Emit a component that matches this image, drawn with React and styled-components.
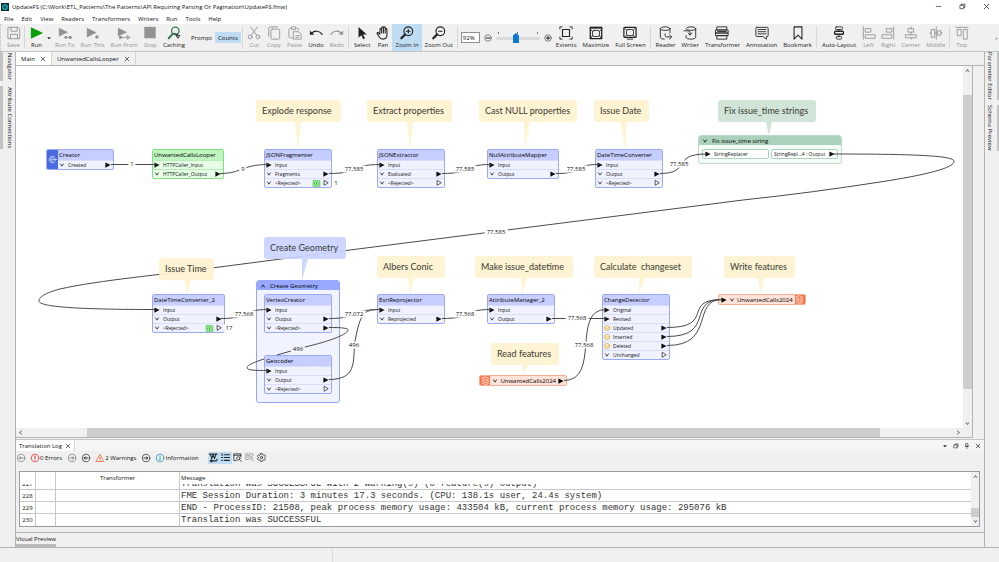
import React from "react";
import styled, { createGlobalStyle } from "styled-components";

const GlobalStyle = createGlobalStyle`
  * {
    box-sizing: border-box;
  }
  body {
    margin: 0;
    background-color: #f0f0f0;
    color: #111;
    font-family: "Open Sans", "Noto Sans", sans-serif;
    font-size: 6px;
    line-height: 8px;
  }
  button,
  input {
    font: inherit;
    color: inherit;
    border: 0;
    padding: 0;
    background: none;
  }
`;

/* ---------- icons ---------- */

const Svg = styled.svg`
  display: block;
  flex: none;
  width: ${(props) => props.$size || 14}px;
  height: ${(props) => props.$size || 14}px;
  fill: none;
  stroke: currentColor;
  stroke-linecap: round;
  stroke-linejoin: round;
  overflow: visible;
`;

const solid = { fill: "currentColor", stroke: "none" };

const shapes = {
  save: (
    <>
      <path d="M1.5 1.5h11l2 2v11h-13z" />
      <path d="M4.5 1.5v4.5h7V1.5M4 14.5v-5h8v5" />
    </>
  ),
  run: <path d="M1 1.5 15 8 1 14.5z" fill="#0a9f0a" stroke="none" />,
  runTo: (
    <>
      <path d="M1 2 11.5 7 1 12z" {...solid} />
      <path d="M7 13h7" />
      <circle cx="9" cy="13" r="1.6" {...solid} />
      <circle cx="14" cy="13" r="1.8" {...solid} />
    </>
  ),
  runThis: (
    <>
      <path d="M1 2 12 7.5 1 13z" {...solid} />
      <circle cx="12.5" cy="12.5" r="2" {...solid} />
    </>
  ),
  runFrom: (
    <>
      <path d="M1 2 11.5 7 1 12z" {...solid} />
      <circle cx="4" cy="13" r="1.8" {...solid} />
      <path d="M5 13h8M12 11l3 2-3 2z" />
    </>
  ),
  stop: <path d="M1.5 1h13v13h-13z" {...solid} />,
  caching: (
    <>
      <g stroke="#3c7a56" strokeWidth="1.5">
        <circle cx="9.5" cy="5.5" r="4.3" />
        <path d="M6.5 9 2 14" strokeWidth="2.4" />
      </g>
      <path d="M8 8.5c3 0 4.5 1 4.5 3M10.500 11l2 3 2-3z" />
    </>
  ),
  cut: (
    <>
      <circle cx="3.5" cy="12.5" r="2.2" />
      <circle cx="12.5" cy="12.5" r="2.2" />
      <path d="M4.800 10.600 12 1M11.200 10.600 4 1" />
    </>
  ),
  copy: (
    <>
      <rect x="4.5" y="3.5" width="10" height="11.5" rx="1.5" />
      <path d="M2 12V2.500A1.500 1.500 0 0 1 3.500 1H12" />
    </>
  ),
  paste: (
    <>
      <path d="M5 13.500H2.500A1.500 1.500 0 0 1 1 12V4a1.500 1.500 0 0 1 1.500-1.500H4M9 2.500h1.500A1.500 1.500 0 0 1 12 4v1" />
      <path d="M4.500 1h4v3h-4zM6.500 6.500h5.500L15 9.500v5.500H6.500zM9 11h4M9 13h3" />
    </>
  ),
  undo: (
    <>
      <path d="M3 8.500C6 5 12 5 15 9.500" strokeWidth="1.4" />
      <path d="M1 5v5h5z" {...solid} />
    </>
  ),
  redo: (
    <>
      <path d="M13 8.500C10 5 4 5 1 9.500" strokeWidth="1.4" />
      <path d="M15 5v5h-5z" {...solid} />
    </>
  ),
  select: <path d="M4 1v12.500l3.200-3 2.200 4.500 2-1-2.200-4.300h4.300z" {...solid} />,
  pan: (
    <path
      strokeWidth="1.2"
      d="M4.500 9.500V4a1 1 0 0 1 2 0V2a1 1 0 0 1 2 0v0a1 1 0 0 1 2 0v2a1 1 0 0 1 2 0v6c0 3-1.500 5-4.500 5-2.500 0-3.500-1-4.500-2.800L1.300 8.700c-.5-1.200 1-1.700 1.700-.9zM6.500 4v4M8.500 2.500V8M10.500 4v4"
    />
  ),
  zoomIn: (
    <>
      <circle cx="9.5" cy="6" r="5" strokeWidth="1.3" />
      <path d="M7.500 6h4M9.500 4v4" strokeWidth="1.3" />
      <path d="M5.800 9.700 1.500 14" strokeWidth="2.6" />
    </>
  ),
  zoomOut: (
    <>
      <circle cx="9.5" cy="6" r="5" strokeWidth="1.3" />
      <path d="M7.500 6h4" strokeWidth="1.3" />
      <path d="M5.800 9.700 1.500 14" strokeWidth="2.6" />
    </>
  ),
  extents: (
    <>
      <path d="M4 4h8v8H4z" strokeWidth="1.3" />
      <path d="M1 3.500V1h2.500M12.500 1H15v2.500M15 12.500V15h-2.500M3.500 15H1v-2.500" />
    </>
  ),
  maximize: (
    <>
      <path d="M1.500 1.500h13v13h-13z" strokeWidth="1.5" />
      <path d="M1 1h14v2H1z" {...solid} />
      <rect x="4" y="5" width="8" height="7" rx="2" />
      <path d="M2 4l2 2M14 4l-2 2M2 14l2-3M14 14l-2-3" />
    </>
  ),
  fullScreen: (
    <>
      <rect x="1" y="1.5" width="14" height="11.5" rx="1" strokeWidth="1.4" />
      <rect x="4" y="4" width="8" height="7" rx="2" />
      <path d="M2 2.500l2 2M14 2.500l-2 2M2 12.500l2-2M14 12.500l-2-2M5 15h6" />
    </>
  ),
  reader: (
    <>
      <ellipse cx="7" cy="3" rx="5.5" ry="2" />
      <path d="M1.500 3v10c0 1.200 2 2 4.500 2M12.500 3v5" />
      <path d="M7 9v1.500a2 2 0 0 0 2 2h5M12 10l2.500 2.500L12 15" />
    </>
  ),
  writer: (
    <>
      <ellipse cx="9" cy="3" rx="5.5" ry="2" />
      <path d="M14.500 3v10c0 1.200-2.500 2-5.500 2s-5.500-.8-5.500-2v-2" />
      <path d="M1 5.500h5a2 2 0 0 1 2 2V10M6 8l2 2.500L10 8" />
    </>
  ),
  transformer: (
    <>
      <path d="M2.500 1h11v3.500h-11zM1 4.500h14v3.500H1zM1 8h14v3H1zM2.500 11h11v4h-11z" />
      <path d="M3 6.300h10" />
    </>
  ),
  annotation: (
    <>
      <path d="M2 1.500h12a1 1 0 0 1 1 1v8.500a1 1 0 0 1-1 1h-1v3l-4-3H2a1 1 0 0 1-1-1V2.500a1 1 0 0 1 1-1z" />
      <path d="M3.500 4h9M3.500 6.500h9M3.500 9h9" />
    </>
  ),
  bookmark: <path d="M3.500 1h9v14L8 10.500 3.500 15z" strokeWidth="1.2" />,
  autoLayout: (
    <>
      <rect x="4" y="1" width="8" height="3" rx="1" />
      <rect x="3" y="6" width="10" height="3.5" rx="1" strokeWidth="1.6" />
      <rect x="5" y="12" width="6" height="3" rx="1" />
      <path d="M8 4v2M8 9.500V12" />
    </>
  ),
  alignLeft: <path d="M1.500 1v14M4 3h6v4H4zM4 10h11v4H4z" />,
  alignRight: <path d="M14.500 1v14M12 3H6v4h6zM12 10H1v4h11z" />,
  alignCenter: <path d="M8 1v2M5 3h6v4H5zM8 7v3M2 10h12v3.500H2zM8 13.500V15" />,
  alignMiddle: <path d="M1 8h1.500M3 4h3.500v9H3zM6.500 8H10M8.300 1v14M10 5.500h3.500v5H10zM13.500 8H15" />,
  alignTop: <path d="M1 1.500h14M3 4h4v7H3zM10 4h4v11h-4z" />,
  caret: <path d="M3 6h10l-5 5z" {...solid} />,
  close: <path d="M3 3l10 10M13 3 3 13" strokeWidth="1.8" />,
  minimize: <path d="M3 8h10" strokeWidth="1.5" />,
  restore: <path d="M3 5h8v8H3zM5.500 5V2.500h8V10H11" strokeWidth="1.5" />,
  pin: <path d="M5.500 1.500h5v7h-5zM3.500 9h9M8 9v6" strokeWidth="1.5" />,
  chevronDown: <path d="M4 5l4 6 4-6" strokeWidth="2" />,
  chevronUp: <path d="M4 11l4-6 4 6" strokeWidth="2" />,
  chevronLeft: <path d="M11 3 5 8l6 5" strokeWidth="2" />,
  chevronRight: <path d="M5 3l6 5-6 5" strokeWidth="2" />,
  arrow: <path d="M1 1v14l14-7z" {...solid} />,
  arrowOpen: <path d="M3 2v12l10-6z" strokeWidth="1.8" fill="#fff" />,
  minus: (
    <>
      <circle cx="8" cy="8" r="6.5" />
      <path d="M4.500 8h7" strokeWidth="2" />
    </>
  ),
  plus: (
    <>
      <circle cx="8" cy="8" r="6.5" />
      <path d="M4.500 8h7M8 4.500v7" strokeWidth="2" />
    </>
  ),
  back: (
    <>
      <circle cx="8" cy="8" r="7.5" strokeWidth="1.4" />
      <path d="M12 8H4.500M7 5.500 4.500 8 7 10.500" strokeWidth="1.8" />
    </>
  ),
  forward: (
    <>
      <circle cx="8" cy="8" r="7.5" strokeWidth="1.4" />
      <path d="M4 8h7.500M9 5.500 11.500 8 9 10.500" strokeWidth="1.8" />
    </>
  ),
  error: (
    <g stroke="#e0252b" strokeWidth="1.5">
      <circle cx="8" cy="8" r="7.5" />
      <path d="M8 4v4.500M8 11.500v.3" strokeWidth="2" />
    </g>
  ),
  warning: (
    <g stroke="#e8662c" strokeWidth="1.5">
      <path d="M8 1 15.500 15H.5z" />
      <path d="M8 6v4M8 12.500v.2" strokeWidth="2" />
    </g>
  ),
  info: (
    <g stroke="#1b8fa8" strokeWidth="1.5">
      <circle cx="8" cy="8" r="7.5" />
      <path d="M8 7.500V12M8 4.500v.2" strokeWidth="2" />
    </g>
  ),
  wrap: (
    <path
      strokeWidth="1.8"
      d="M1 2h3M6 2h3M2.500 2l2.300 8L7.500 3l2.300 7L12.500 2M11 2h3M2 14h10a2 2 0 0 0 2-3M5 12l-3 2 3 2"
    />
  ),
  list: (
    <>
      <path d="M6 3h9M6 8h9M6 13h9" strokeWidth="2" />
      <path d="M2 1.500v3M1 8h2M1 13h2" strokeWidth="1.8" />
    </>
  ),
  find: (
    <path
      strokeWidth="1.4"
      d="M14 7V1.500H1.500v12H6M1.500 4H14M12.500 9.500a3 3 0 1 1-6 0 3 3 0 0 1 6 0M11.800 12l3 3"
    />
  ),
  findNext: (
    <path
      strokeWidth="1.3"
      d="M14 5V1.500H1.500v10H6M4 4.500h4M12.500 8.500a2.500 2.500 0 1 1-5 0 2.500 2.500 0 0 1 5 0M12 11l3 3M4 7h2"
    />
  ),
  gear: (
    <>
      <path
        strokeWidth="1.3"
        d="M6.500 1h3l.5 2 1.600.9 2-.6 1.500 2.600-1.500 1.400v1.400l1.500 1.400-1.500 2.600-2-.6-1.600.9-.5 2h-3l-.5-2-1.600-.9-2 .6L.9 10.100l1.500-1.400V7.300L.9 5.900l1.500-2.600 2 .6L6 3z"
      />
      <circle cx="8" cy="8" r="2" strokeWidth="1.5" />
    </>
  ),
  logo: (
    <>
      <path d="M0 0h16v16H0z" fill="#0d2a33" stroke="none" />
      <circle cx="8" cy="8" r="4.5" stroke="#27b7c4" strokeWidth="2.5" />
      <circle cx="8" cy="8" r="1.5" fill="#27b7c4" stroke="none" />
    </>
  ),
  creator: (
    <g stroke="#dfe5ff" strokeWidth="1.3">
      <path d="M11.500 3a6 6 0 1 0 0 10" />
      <path d="M10 5.500a3.300 3.300 0 1 0 0 5M7 8h8M13 6l2 2-2 2" />
    </g>
  ),
  dataset: (
    <g stroke="#ffd9c9" strokeWidth="1.5">
      <path d="M8 1.500 14 4 8 6.500 2 4z" />
      <path d="M2 7l6 2.500L14 7M2 10l6 2.500L14 10M2 13l6 2.500L14 13" />
    </g>
  ),
  eye: (
    <>
      <rect x="0" y="1" width="16" height="14" rx="2" fill="#8be88b" stroke="#35b635" />
      <path d="M3 8c2.500-4 7.500-4 10 0-2.500 4-7.500 4-10 0z" fill="#d5fbd5" stroke="#2a9a2a" />
      <circle cx="8" cy="8" r="1.5" fill="#1f8a1f" stroke="none" />
    </>
  ),
  expand: (
    <g stroke="#c09a30" strokeWidth="1.5">
      <circle cx="8" cy="8" r="7" fill="#fff0bd" />
      <path d="M5 7l3 3 3-3" />
    </g>
  ),
};

const Icon = ({ name, size }) => (
  <Svg viewBox="0 0 16 16" $size={size} aria-hidden="true">
    {shapes[name]}
  </Svg>
);

/* ---------- window chrome ---------- */

const Window = styled.div`
  display: flex;
  flex-direction: column;
  min-height: 100vh;
  overflow: hidden;
`;

const TitleBar = styled.header`
  display: flex;
  align-items: center;
  gap: 3px;
  height: 13px;
  padding: 0 9px 0 1px;
  background-color: #fff;
`;

const Title = styled.h1`
  flex: 1;
  margin: 0;
  font-size: 6px;
  font-weight: 400;
  white-space: nowrap;
`;

const WindowButtons = styled.div`
  display: flex;
  gap: 17px;
`;

const IconButton = styled.button`
  display: flex;
  align-items: center;
  color: ${(props) => (props.$faded ? "#777" : "#222")};
`;

const MenuBar = styled.nav`
  display: flex;
  height: 11px;
  background-color: #fff;
`;

const MenuItem = styled.button`
  padding: 0 4px;
  line-height: 10px;
`;

const Toolbar = styled.div`
  display: flex;
  align-items: stretch;
  height: 27px;
  padding: 0 1px 0 3px;
  border-left: 1px dotted #bbb;
  background-color: #f0f0f0;
`;

const ToolButton = styled.button`
  display: flex;
  flex-direction: column;
  align-items: center;
  gap: 1px;
  padding: 2px 3px 0;
  white-space: nowrap;
  color: ${(props) => (props.$disabled ? "#929292" : "#222")};
  background-color: ${(props) => (props.$active ? "#bfdcf3" : "transparent")};
`;

const ToolLabel = styled.span`
  display: flex;
  justify-content: center;
  min-width: 13px;
`;

const ToolIcon = styled.span`
  display: flex;
  justify-content: center;
  width: 12px;
`;

const TextTool = styled.button`
  align-self: center;
  height: 11px;
  padding: 0 3px;
  background-color: ${(props) => (props.$active ? "#bfdcf3" : "transparent")};
`;

const Separator = styled.div`
  width: 1px;
  margin: 2px 2px 2px 1px;
  background-color: #d8d8d8;
`;

const ZoomGroup = styled.div`
  display: flex;
  align-items: center;
  gap: 4px;
  padding: 0 1px;
`;

const ZoomValue = styled.input`
  width: 19px;
  height: 11px;
  padding: 0 1px;
  border: 1px solid #8f8f8f;
  background-color: #fff;
`;

const ZoomScale = styled.label`
  display: flex;
  flex-direction: column;
  width: 44px;
`;

const Ticks = styled.span`
  display: flex;
  justify-content: space-between;
  height: 2px;
  padding: 0 2px;

  i {
    width: 1px;
    background-color: #777;
  }
`;

const Slider = styled.input`
  appearance: none;
  width: 100%;
  height: 10px;
  margin: 0;

  &::-webkit-slider-runnable-track {
    height: 3px;
    background-color: #dcdcdc;
  }
  &::-webkit-slider-thumb {
    appearance: none;
    width: 6px;
    height: 10px;
    margin-top: -4px;
    background-color: #0a78d4;
    clip-path: polygon(0 25%, 50% 0, 100% 25%, 100% 100%, 0 100%);
  }
`;

const Overflow = styled.button`
  margin-left: auto;
  color: #666;
`;

/* ---------- body ---------- */

const Body = styled.div`
  display: flex;
  flex: 1;
  border-top: 1px solid #c4c4c4;
`;

const Rail = styled.aside`
  display: flex;
  flex-direction: column;
  gap: 5px;
  width: ${(props) => (props.$right ? 14 : 15)}px;
`;

const RailTab = styled.button`
  padding: ${(props) => (props.$right ? "0 2px 0 0" : "1px 0")};
  border-left: ${(props) => (props.$right ? "0" : "3px solid #c2c2c2")};
  border-right: ${(props) => (props.$right ? "2px solid #c2c2c2" : "0")};
  writing-mode: vertical-rl;
  text-align: start;
  line-height: 11px;
`;

const Center = styled.main`
  display: flex;
  flex: 1;
  flex-direction: column;
  min-width: 0;
  border-left: 1px solid #b4b4b4;
  border-right: 1px solid #b4b4b4;
`;

const Tabs = styled.div`
  display: flex;
  height: 14px;
  border-bottom: 1px solid #b4b4b4;
`;

const Tab = styled.div`
  display: flex;
  align-items: center;
  gap: 5px;
  padding: 0 5px;
  border-right: 1px solid #d4d4d4;
  background-color: ${(props) => (props.$active ? "#fff" : "#f0f0f0")};
`;

const CanvasFrame = styled.section`
  display: grid;
  flex: 1;
  grid-template-columns: 1fr 9px;
  grid-template-rows: 1fr 9px;
  margin-right: 11px;
  border-right: 1px solid #b4b4b4;
  border-bottom: 1px solid #b4b4b4;
`;

const Canvas = styled.div`
  position: relative;
  overflow: hidden;
  background-color: #fff;
`;

const ScrollBar = styled.div`
  display: flex;
  flex-direction: ${(props) => (props.$vertical ? "column" : "row")};
  align-items: center;
  justify-content: space-between;
  padding: ${(props) => (props.$vertical ? "2px 0" : "0 2px")};
`;

const ScrollTrack = styled.div`
  display: flex;
  flex: 1;
  flex-direction: ${(props) => (props.$vertical ? "column" : "row")};
  align-self: stretch;
`;

const ScrollSpace = styled.div`
  flex: ${(props) => props.$grow};
`;

const ScrollThumb = styled.div`
  flex: ${(props) => props.$grow};
  background-color: #cdcdcd;
`;

/* ---------- workspace canvas ---------- */

const palettes = {
  blue: { head: "#c5cefe", row: "#f0f2ff", line: "#d8ddfa", border: "#9caaf2" },
  green: { head: "#bff4bf", row: "#e6ffe6", line: "#b9ecb9", border: "#7fe07f" },
};

const NodeBox = styled.div`
  position: absolute;
  left: ${(props) => props.$x}px;
  top: ${(props) => props.$y}px;
  width: ${(props) => props.$w}px;
  display: flex;
  border: 1px solid ${(props) => props.$tone.border};
  border-radius: 2px;
  background-color: ${(props) => props.$tone.row};
  overflow: hidden;
`;

const NodeBadge = styled.div`
  display: flex;
  align-items: center;
  justify-content: center;
  width: 11px;
  background-color: #4a6be0;
`;

const NodeBody = styled.div`
  flex: 1;
  min-width: 0;
`;

const NodeTitle = styled.div`
  height: 10px;
  padding-left: 1px;
  line-height: 10px;
  font-weight: 500;
  color: #000;
  white-space: nowrap;
  background-color: ${(props) => props.$tone.head};
`;

const Port = styled.div`
  display: flex;
  align-items: center;
  gap: 3px;
  height: 9px;
  padding: 0 2px 0 1px;
  font-size: 5px;
  border-top: 1px solid ${(props) => props.$tone.line};
`;

const PortName = styled.span`
  flex: 1;
  white-space: nowrap;
`;

const BookmarkBox = styled.div`
  position: absolute;
  left: ${(props) => props.$x}px;
  top: ${(props) => props.$y}px;
  width: ${(props) => props.$w}px;
  height: ${(props) => props.$h}px;
  border: 1px solid ${(props) => props.$border};
  border-radius: 3px;
  background-color: ${(props) => props.$fill};
  overflow: hidden;
`;

const BookmarkTitle = styled.div`
  display: flex;
  align-items: center;
  gap: 4px;
  height: 9px;
  padding-left: 3px;
  font-weight: 500;
  color: #000;
  background-color: ${(props) => props.$head};
`;

const BookmarkPorts = styled.div`
  display: grid;
  grid-template-columns: 1fr 1fr;
  gap: 2px;
  padding: 4px 3px;
`;

const BookmarkPort = styled.div`
  display: flex;
  align-items: center;
  gap: 3px;
  height: 10px;
  padding: 0 2px;
  border: 1px solid #abd0bb;
  border-radius: 2px;
  background-color: #fff;
  font-size: 5px;
  white-space: nowrap;
`;

const FeatureType = styled.div`
  position: absolute;
  left: ${(props) => props.$x}px;
  top: ${(props) => props.$y}px;
  width: 88px;
  height: 11px;
  display: flex;
  flex-direction: ${(props) => (props.$writer ? "row-reverse" : "row")};
  border: 1px solid #f6ab92;
  border-radius: 2px;
  background-color: #ffe3d9;
  overflow: hidden;
`;

const FeatureBadge = styled.div`
  display: flex;
  align-items: center;
  justify-content: center;
  width: 11px;
  background-color: #f4734a;
`;

const FeatureLabel = styled.div`
  display: flex;
  flex: 1;
  align-items: center;
  gap: 2px;
  padding: 0 2px;
  font-weight: 500;
  color: #000;
  white-space: nowrap;
`;

const WireLayer = styled.svg`
  position: absolute;
  inset: 0;
  width: 100%;
  height: 100%;
  fill: none;
  stroke: #4a4a4a;
`;

const WireCount = styled.span`
  position: absolute;
  left: ${(props) => props.$x}px;
  top: ${(props) => props.$y}px;
  transform: translate(-50%, -50%);
  line-height: 7px;
  padding: 0 2px;
  background-color: ${(props) => props.$fill || "#fff"};
`;

const CalloutBox = styled.div`
  position: absolute;
  left: ${(props) => props.$x}px;
  top: ${(props) => props.$y}px;
  width: ${(props) => props.$w}px;
  height: 22px;
  padding-left: 6px;
  border-radius: 3px;
  background-color: ${(props) => props.$fill};
  font-family: Lato, "Open Sans", sans-serif;
  font-size: 9px;
  line-height: 22px;
  white-space: pre;
  color: #3a3a33;
`;

const CalloutTail = styled.svg`
  position: absolute;
  left: 0;
  top: 100%;
  width: 100%;
  height: ${(props) => props.$h}px;
  overflow: visible;
`;

const nodes = [
  { name: "Creator", x: 30, y: 83, w: 68, badge: true, ports: [["out", "Created"]] },
  { name: "UnwantedCallsLooper", x: 136, y: 83, w: 72, tone: "green", ports: [["in", "HTTPCaller_Input"], ["out", "HTTPCaller_Output"]] },
  { name: "JSONFragmenter", x: 248, y: 83, w: 68, ports: [["in", "Input"], ["out", "Fragments"], ["seen", "<Rejected>"]] },
  { name: "JSONExtractor", x: 361, y: 83, w: 68, ports: [["in", "Input"], ["out", "Evaluated"], ["open", "<Rejected>"]] },
  { name: "NullAttributeMapper", x: 471, y: 83, w: 72, ports: [["in", "Input"], ["out", "Output"]] },
  { name: "DateTimeConverter", x: 579, y: 83, w: 68, ports: [["in", "Input"], ["out", "Output"], ["open", "<Rejected>"]] },
  { name: "DateTimeConverter_2", x: 136, y: 228, w: 73, ports: [["in", "Input"], ["out", "Output"], ["seen", "<Rejected>"]] },
  { name: "VertexCreator", x: 248, y: 228, w: 68, ports: [["in", "Input"], ["out", "Output"], ["out", "<Rejected>"]] },
  { name: "Geocoder", x: 248, y: 289, w: 68, ports: [["in", "Input"], ["out", "Output"], ["open", "<Rejected>"]] },
  { name: "EsriReprojector", x: 361, y: 228, w: 68, ports: [["in", "Input"], ["out", "Reprojected"]] },
  { name: "AttributeManager_2", x: 471, y: 228, w: 68, ports: [["in", "Input"], ["out", "Output"]] },
  {
    name: "ChangeDetector",
    x: 586,
    y: 228,
    w: 68,
    ports: [["in", "Original"], ["in", "Revised"], ["multi", "Updated"], ["multi", "Inserted"], ["multi", "Deleted"], ["open", "Unchanged"]],
  },
];

const wires = [
  "M95 98.500H140",
  "M204 107.500C226 107.500 226 98.500 252 98.500",
  "M313 107.500C345 107.500 332 98.500 365 98.500",
  "M426 107.500C458 107.500 445 98.500 475 98.500",
  "M540 107.500C570 107.500 555 98.500 583 98.500",
  "M644 107.500C676 107.500 655 88 690 88",
  "M817 88C904 88 937 90 938 95C939 102 909 109 864 116C819 123 774 129 727 134L334 184L199 201.600C144 209 84 214 44 223C29 227 23 231 23 235C23 241 64 243.500 139 243.500",
  "M205 252.500C235 252.500 225 243.500 252 243.500",
  "M313 252.500C345 252.500 332 243.500 365 243.500",
  "M313 261.500C325 261.500 332 262 332 264C332 268 315 275 289 281L261 289",
  "M248 293C239 296 231 299 231 301.500C231 304.500 240 304.500 252 304.500",
  "M313 313.500C345 313.500 335 290 340 270C345 245 350 243.500 365 243.500",
  "M426 252.500C458 252.500 445 243.500 475 243.500",
  "M536 252.500H590",
  "M548 314.500C585 314.500 555 243.500 590 243.500",
  "M651 261.500C700 261.500 665 233.500 706 233.500",
  "M651 270.500C700 270.500 670 233.500 706 233.500",
  "M651 279.500C700 279.500 675 233.500 706 233.500",
];

const counts = [
  ["1", 116, 98],
  ["9", 227, 103],
  ["77,585", 338, 103],
  ["1", 320, 117],
  ["77,585", 449, 103],
  ["77,585", 560, 103],
  ["77,585", 663, 98],
  ["77,585", 480, 166],
  ["77,568", 228, 248],
  ["17", 213, 262],
  ["77,072", 338, 248],
  ["496", 282, 283, "#f1f4ff"],
  ["496", 338, 279],
  ["77,568", 449, 248],
  ["77,568", 561, 252],
  ["77,568", 568, 279],
];

const yellow = "#fef2cfee";

// tail: [left edge of the base, tip x, length], measured from the box
const callouts = [
  { text: "Explode response", x: 240, y: 34, w: 85, tail: [39, 42, 28] },
  { text: "Extract properties", x: 351, y: 34, w: 85, tail: [40, 43, 28] },
  { text: "Cast NULL properties", x: 463, y: 34, w: 98, tail: [45, 46, 28] },
  { text: "Issue Date", x: 578, y: 34, w: 55, tail: [26, 32, 28] },
  { text: "Fix issue_time strings", x: 702, y: 34, w: 98, tail: [48, 51, 14], fill: "#d0e4d8" },
  { text: "Issue Time", x: 143, y: 192, w: 55, tail: [26, 28, 15] },
  { text: "Create Geometry", x: 248, y: 171, w: 82, tail: [38, 38, 21], fill: "#cad4ffee" },
  { text: "Albers Conic", x: 361, y: 190, w: 68, tail: [31, 33, 16] },
  { text: "Make issue_datetime", x: 459, y: 190, w: 98, tail: [46, 47, 16] },
  { text: "Read features", x: 475, y: 277, w: 68, tail: [31, 33, 10] },
  { text: "Calculate  changeset", x: 578, y: 190, w: 98, tail: [45, 45, 16] },
  { text: "Write features", x: 708, y: 190, w: 71, tail: [34, 37, 16] },
];

const Node = ({ node }) => {
  const tone = palettes[node.tone || "blue"];
  return (
    <NodeBox $x={node.x} $y={node.y} $w={node.w} $tone={tone}>
      {node.badge && (
        <NodeBadge>
          <Icon name="creator" size={9} />
        </NodeBadge>
      )}
      <NodeBody>
        <NodeTitle $tone={tone}>{node.name}</NodeTitle>
        {node.ports.map(([kind, label]) => (
          <Port key={label} $tone={tone}>
            {kind === "in" && <Icon name="arrow" size={6} />}
            {kind === "multi" && <Icon name="expand" size={6} />}
            {["out", "open", "seen"].includes(kind) && <Icon name="chevronDown" size={6} />}
            <PortName>{label}</PortName>
            {kind === "seen" && <Icon name="eye" size={7} />}
            {["out", "multi"].includes(kind) && <Icon name="arrow" size={6} />}
            {["open", "seen"].includes(kind) && <Icon name="arrowOpen" size={6} />}
          </Port>
        ))}
      </NodeBody>
    </NodeBox>
  );
};

const Callout = ({ text, x, y, w, tail, fill = yellow }) => {
  const [base, tip, length] = tail;
  return (
    <CalloutBox $x={x} $y={y} $w={w} $fill={fill}>
      {text}
      <CalloutTail $h={length} aria-hidden="true">
        <polygon points={`${base},0 ${base + 6},0 ${tip},${length}`} fill={fill} />
      </CalloutTail>
    </CalloutBox>
  );
};

const Workspace = () => (
  <Canvas>
    <BookmarkBox $x={682} $y={69} $w={144} $h={29} $border="#bddac9" $fill="#f5fbf7">
      <BookmarkTitle $head="#abd0bb">
        <Icon name="chevronDown" size={6} />
        Fix issue_time string
      </BookmarkTitle>
      <BookmarkPorts>
        <BookmarkPort>
          <Icon name="arrow" size={6} />
          StringReplacer
        </BookmarkPort>
        <BookmarkPort>
          <PortName>StringRepl...4 : Output</PortName>
          <Icon name="arrow" size={6} />
        </BookmarkPort>
      </BookmarkPorts>
    </BookmarkBox>
    <BookmarkBox $x={240} $y={214} $w={84} $h={123} $border="#97a6fa" $fill="#f1f4ff">
      <BookmarkTitle $head="#98a8ff">
        <Icon name="chevronUp" size={6} />
        Create Geometry
      </BookmarkTitle>
    </BookmarkBox>
    {nodes.map((node) => (
      <Node key={node.name} node={node} />
    ))}
    <FeatureType $x={463} $y={309}>
      <FeatureBadge>
        <Icon name="dataset" size={9} />
      </FeatureBadge>
      <FeatureLabel>
        <Icon name="chevronDown" size={6} />
        <PortName>UnwantedCalls2024</PortName>
        <Icon name="arrow" size={6} />
      </FeatureLabel>
    </FeatureType>
    <FeatureType $x={702} $y={228} $writer>
      <FeatureBadge>
        <Icon name="dataset" size={9} />
      </FeatureBadge>
      <FeatureLabel>
        <Icon name="arrow" size={6} />
        <Icon name="chevronDown" size={6} />
        UnwantedCalls2024
      </FeatureLabel>
    </FeatureType>
    <WireLayer aria-hidden="true">
      {wires.map((d) => (
        <path key={d} d={d} />
      ))}
    </WireLayer>
    {callouts.map((callout) => (
      <Callout key={callout.text} {...callout} />
    ))}
    {counts.map(([text, x, y, fill], index) => (
      <WireCount key={index} $x={x} $y={y} $fill={fill}>
        {text}
      </WireCount>
    ))}
  </Canvas>
);

/* ---------- translation log ---------- */

const LogDock = styled.section`
  margin-top: 1px;
  border-top: 1px solid #c4c4c4;
  border-bottom: 1px solid #b4b4b4;
  padding-bottom: 5px;
`;

const LogHeader = styled.div`
  display: flex;
  justify-content: space-between;
  height: 11px;
  background-color: #f5f5f5;
`;

const LogTab = styled(Tab)`
  gap: 3px;
  padding: 0 3px;
`;

const DockButtons = styled.div`
  display: flex;
  align-items: center;
  gap: 5px;
  padding-right: 3px;
`;

const LogTools = styled.div`
  display: flex;
  align-items: center;
  gap: 6px;
  height: 13px;
  padding: 0 1px;
`;

const LogFilter = styled.button`
  display: flex;
  align-items: center;
  gap: 1px;
`;

const LogToggles = styled.div`
  display: flex;
  align-items: center;
  margin-left: 3px;
`;

const LogToggle = styled.button`
  display: flex;
  align-items: center;
  justify-content: center;
  width: 12px;
  height: 12px;
  color: ${(props) => (props.$faded ? "#888" : "#222")};
  background-color: ${(props) => (props.$active ? "#bfdcf3" : "transparent")};
`;

const LogView = styled.div`
  display: flex;
  margin: 7px 4px 0 3px;
  border: 1px solid #9a9aa4;
  background-color: #fff;
`;

const LogTable = styled.table`
  display: block;
  flex: 1;

  tr {
    display: grid;
    grid-template-columns: 16px 20px 124px 1fr;
    height: 12px;
  }
  thead,
  tbody {
    display: block;
  }
  tbody {
    display: flex;
    flex-direction: column;
    justify-content: flex-end;
    height: 42px;
    overflow: hidden;
  }
  tbody tr {
    flex: none;
    border-bottom: 1px solid #c8c8cc;
  }
  tbody tr:last-child {
    border-bottom: 0;
  }
  th,
  td {
    padding: 0 1px;
    border-right: 1px solid #c8c8cc;
    font-weight: 400;
    line-height: 12px;
    text-align: center;
    white-space: nowrap;
  }
  th:last-child,
  td:last-child {
    border-right: 0;
    text-align: left;
  }
  td:last-child {
    font-family: "Liberation Mono", monospace;
    font-size: 9px;
    color: #333;
  }
`;

const LogScroll = styled(ScrollBar)`
  width: 8px;
  background-color: #f0f0f0;
`;

const PreviewBar = styled.div`
  display: flex;
  height: 14px;
`;

const PreviewTab = styled.button`
  border-bottom: 3px solid #bcbcbc;
`;

const StatusBar = styled.footer`
  display: grid;
  grid-template-columns: 1fr 2fr;
  height: 15px;
  border-top: 1px solid #b4b4b4;
`;

const StatusCell = styled.div`
  border-right: 1px solid #dadada;
`;

const logRows = [
  [227, "Translation was SUCCESSFUL with 2 warning(s) (0 feature(s) output)"],
  [228, "FME Session Duration: 3 minutes 17.3 seconds. (CPU: 138.1s user, 24.4s system)"],
  [229, "END - ProcessID: 21508, peak process memory usage: 433504 kB, current process memory usage: 295076 kB"],
  [230, "Translation was SUCCESSFUL"],
];

const TranslationLog = () => (
  <LogDock>
    <LogHeader>
      <LogTab $active>
        Translation Log
        <IconButton aria-label="Close Translation Log">
          <Icon name="close" size={6} />
        </IconButton>
      </LogTab>
      <DockButtons>
        {["caret", "restore", "pin", "close"].map((name) => (
          <IconButton key={name} aria-label={name}>
            <Icon name={name} size={6} />
          </IconButton>
        ))}
      </DockButtons>
    </LogHeader>
    <LogTools>
      <IconButton aria-label="Previous error" $faded>
        <Icon name="back" size={8} />
      </IconButton>
      <LogFilter>
        <Icon name="error" size={8} />0 Errors
      </LogFilter>
      <IconButton aria-label="Next error" $faded>
        <Icon name="forward" size={8} />
      </IconButton>
      <IconButton aria-label="Previous warning">
        <Icon name="back" size={8} />
      </IconButton>
      <LogFilter>
        <Icon name="warning" size={8} />2 Warnings
      </LogFilter>
      <IconButton aria-label="Next warning">
        <Icon name="forward" size={8} />
      </IconButton>
      <LogFilter>
        <Icon name="info" size={8} />
        Information
      </LogFilter>
      <LogToggles>
        <LogToggle aria-label="Word wrap" $active>
          <Icon name="wrap" size={9} />
        </LogToggle>
        <LogToggle aria-label="Line numbers" $active>
          <Icon name="list" size={9} />
        </LogToggle>
        <LogToggle aria-label="Find">
          <Icon name="find" size={9} />
        </LogToggle>
        <LogToggle aria-label="Find next" $faded>
          <Icon name="findNext" size={9} />
        </LogToggle>
        <LogToggle aria-label="Log options">
          <Icon name="gear" size={9} />
        </LogToggle>
      </LogToggles>
    </LogTools>
    <LogView>
      <LogTable>
        <thead>
          <tr>
            <th />
            <th />
            <th>Transformer</th>
            <th>Message</th>
          </tr>
        </thead>
        <tbody>
          {logRows.map(([line, message]) => (
            <tr key={line}>
              <td>{line}</td>
              <td />
              <td />
              <td>{message}</td>
            </tr>
          ))}
        </tbody>
      </LogTable>
      <LogScroll $vertical>
        <Icon name="chevronUp" size={5} />
        <ScrollTrack $vertical>
          <ScrollSpace $grow={30} />
          <ScrollThumb $grow={10} />
          <ScrollSpace $grow={2} />
        </ScrollTrack>
        <Icon name="chevronDown" size={5} />
      </LogScroll>
    </LogView>
  </LogDock>
);

/* ---------- main toolbar ---------- */

const Tool = ({ icon, label, active, disabled }) => (
  <ToolButton $active={active} $disabled={disabled}>
    <ToolIcon>
      <Icon name={icon} />
    </ToolIcon>
    <ToolLabel>{label}</ToolLabel>
  </ToolButton>
);

const menus = ["File", "Edit", "View", "Readers", "Transformers", "Writers", "Run", "Tools", "Help"];

const MainToolbar = () => (
  <Toolbar>
    <Tool icon="save" label="Save" disabled />
    <Separator />
    <Tool icon="run" label="Run" />
    <IconButton aria-label="Run options">
      <Icon name="caret" size={6} />
    </IconButton>
    <Tool icon="runTo" label="Run To" disabled />
    <Tool icon="runThis" label="Run This" disabled />
    <Tool icon="runFrom" label="Run From" disabled />
    <Tool icon="stop" label="Stop" disabled />
    <Tool icon="caching" label="Caching" />
    <TextTool>Prompt</TextTool>
    <TextTool $active>Counts</TextTool>
    <Separator />
    <Tool icon="cut" label="Cut" disabled />
    <Tool icon="copy" label="Copy" disabled />
    <Tool icon="paste" label="Paste" disabled />
    <Tool icon="undo" label="Undo" />
    <Tool icon="redo" label="Redo" disabled />
    <Separator />
    <Tool icon="select" label="Select" />
    <Tool icon="pan" label="Pan" />
    <Tool icon="zoomIn" label="Zoom In" active />
    <Tool icon="zoomOut" label="Zoom Out" />
    <Separator />
    <ZoomGroup>
      <ZoomValue aria-label="Zoom level" defaultValue="92%" />
      <IconButton aria-label="Zoom out one step">
        <Icon name="minus" size={8} />
      </IconButton>
      <ZoomScale>
        <Ticks>
          <i />
          <i />
          <i />
        </Ticks>
        <Slider type="range" min="0" max="100" defaultValue="45" aria-label="Zoom" />
      </ZoomScale>
      <IconButton aria-label="Zoom in one step">
        <Icon name="plus" size={8} />
      </IconButton>
    </ZoomGroup>
    <Tool icon="extents" label="Extents" />
    <Tool icon="maximize" label="Maximize" />
    <Tool icon="fullScreen" label="Full Screen" />
    <Separator />
    <Tool icon="reader" label="Reader" />
    <Tool icon="writer" label="Writer" />
    <Tool icon="transformer" label="Transformer" />
    <Tool icon="annotation" label="Annotation" />
    <Tool icon="bookmark" label="Bookmark" />
    <Separator />
    <Tool icon="autoLayout" label="Auto-Layout" />
    <Tool icon="alignLeft" label="Left" disabled />
    <Tool icon="alignRight" label="Right" disabled />
    <Tool icon="alignCenter" label="Center" disabled />
    <Tool icon="alignMiddle" label="Middle" disabled />
    <Separator />
    <Tool icon="alignTop" label="Top" disabled />
    <Overflow>»</Overflow>
  </Toolbar>
);

const App = () => {
  return (
    <Window>
      <GlobalStyle />
      <TitleBar>
        <Icon name="logo" size={8} />
        <Title>
          {"UpdateFS (C:\\Work\\ETL_Patterns\\The Patterns\\API Requiring Parsing Or Pagination\\UpdateFS.fmw)"}
        </Title>
        <WindowButtons>
          {["minimize", "restore", "close"].map((name) => (
            <IconButton key={name} aria-label={name}>
              <Icon name={name} size={7} />
            </IconButton>
          ))}
        </WindowButtons>
      </TitleBar>
      <MenuBar>
        {menus.map((menu) => (
          <MenuItem key={menu}>{menu}</MenuItem>
        ))}
      </MenuBar>
      <MainToolbar />
      <Body>
        <Rail>
          <RailTab>Navigator</RailTab>
          <RailTab>Attribute Connections</RailTab>
        </Rail>
        <Center>
          <Tabs>
            <Tab $active>
              Main
              <IconButton aria-label="Close Main">
                <Icon name="close" size={6} />
              </IconButton>
            </Tab>
            <Tab>
              UnwantedCallsLooper
              <IconButton aria-label="Close UnwantedCallsLooper">
                <Icon name="close" size={6} />
              </IconButton>
            </Tab>
          </Tabs>
          <CanvasFrame>
            <Workspace />
            <ScrollBar $vertical>
              <Icon name="chevronUp" size={5} />
              <ScrollTrack $vertical>
                <ScrollSpace $grow={22} />
                <ScrollThumb $grow={294} />
                <ScrollSpace $grow={32} />
              </ScrollTrack>
              <Icon name="chevronDown" size={5} />
            </ScrollBar>
            <ScrollBar>
              <Icon name="chevronLeft" size={5} />
              <ScrollTrack>
                <ScrollSpace $grow={64} />
                <ScrollThumb $grow={793} />
                <ScrollSpace $grow={76} />
              </ScrollTrack>
              <Icon name="chevronRight" size={5} />
            </ScrollBar>
          </CanvasFrame>
          <TranslationLog />
          <PreviewBar>
            <PreviewTab>Visual Preview</PreviewTab>
          </PreviewBar>
        </Center>
        <Rail $right>
          <RailTab $right>Parameter Editor</RailTab>
          <RailTab $right>Schema Preview</RailTab>
        </Rail>
      </Body>
      <StatusBar>
        <StatusCell />
      </StatusBar>
    </Window>
  );
};

export default App;
